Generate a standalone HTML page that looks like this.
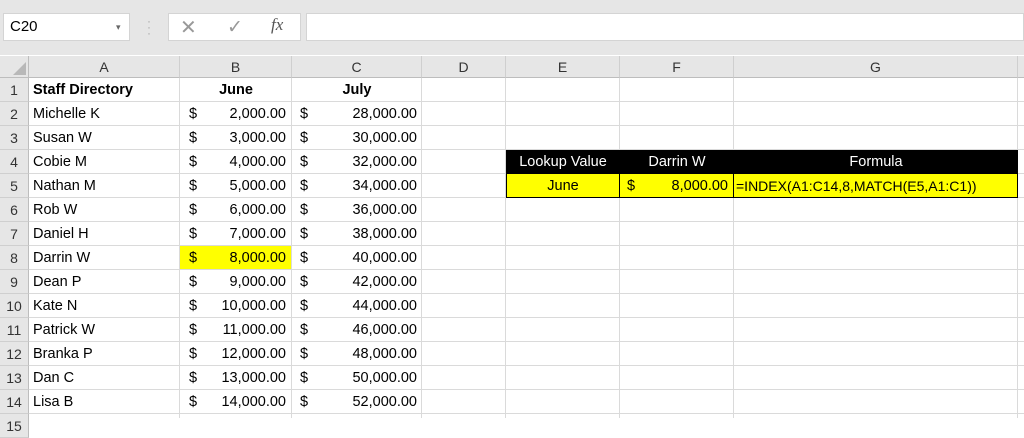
<!DOCTYPE html>
<html><head><style>
*{margin:0;padding:0;box-sizing:border-box}
body{width:1024px;height:418px;overflow:hidden;background:#fff;font-family:"Liberation Sans",Arial,sans-serif;font-size:14.5px;color:#000;position:relative}
.a{position:absolute}
.tb{left:0;top:0;width:1024px;height:55px;background:#e6e6e6}
.box{background:#fff;border:1px solid #d4d4d4}
.ch{top:56px;height:22px;background:#e6e6e6;border-right:1px solid #cfcfcf;border-bottom:1px solid #bdbdbd;text-align:center;line-height:22px;color:#333;font-size:14px}
.rh{left:0;width:29px;height:24px;background:#e6e6e6;border-bottom:1px solid #cfcfcf;border-right:1px solid #bdbdbd;text-align:center;line-height:24px;color:#333;font-size:14px}
.hl{height:1px;background:#dadada;left:29px;width:995px}
.vl{width:1px;background:#dadada;top:78px;height:340px}
.c{height:24px;line-height:24px;white-space:nowrap}
</style></head><body>
<div class="a tb"></div>
<div class="a box" style="left:3px;top:13px;width:127px;height:28px;line-height:26px;padding-left:6px;font-size:15px">C20<span class="a" style="left:112px;top:0;font-size:9px;color:#666">▾</span></div>
<div class="a" style="left:147px;top:18px;color:#aaa;font-size:12px;line-height:6px">·<br>·<br>·</div>
<div class="a box" style="left:168px;top:13px;width:133px;height:28px"></div>
<div class="a" style="left:180px;top:15px;color:#999;font-size:20px">✕</div>
<div class="a" style="left:227px;top:16px;color:#999;font-size:19px">✓</div>
<div class="a" style="left:271px;top:15px;color:#555;font-size:17px;font-family:'Liberation Serif',serif;font-style:italic">fx</div>
<div class="a box" style="left:306px;top:13px;width:718px;height:28px"></div>
<div class="a" style="left:0;top:56px;width:29px;height:22px;background:#e6e6e6;border-right:1px solid #bdbdbd;border-bottom:1px solid #bdbdbd"></div>
<div class="a" style="left:13px;top:62px;width:0;height:0;border-left:13px solid transparent;border-bottom:13px solid #b8b8b8"></div>
<div class="a ch" style="left:29px;width:151px">A</div>
<div class="a ch" style="left:180px;width:112px">B</div>
<div class="a ch" style="left:292px;width:130px">C</div>
<div class="a ch" style="left:422px;width:84px">D</div>
<div class="a ch" style="left:506px;width:114px">E</div>
<div class="a ch" style="left:620px;width:114px">F</div>
<div class="a ch" style="left:734px;width:284px">G</div>
<div class="a ch" style="left:1018px;width:10px"></div>
<div class="a vl" style="left:179px"></div><div class="a vl" style="left:291px"></div><div class="a vl" style="left:421px"></div><div class="a vl" style="left:505px"></div><div class="a vl" style="left:619px"></div><div class="a vl" style="left:733px"></div><div class="a vl" style="left:1017px"></div>
<div id="rows"></div>
<script></script>
<!-- rows -->
<div class="a rh" style="top:78px">1</div><div class="a hl" style="top:101px"></div>
<div class="a rh" style="top:102px">2</div><div class="a hl" style="top:125px"></div>
<div class="a rh" style="top:126px">3</div><div class="a hl" style="top:149px"></div>
<div class="a rh" style="top:150px">4</div><div class="a hl" style="top:173px"></div>
<div class="a rh" style="top:174px">5</div><div class="a hl" style="top:197px"></div>
<div class="a rh" style="top:198px">6</div><div class="a hl" style="top:221px"></div>
<div class="a rh" style="top:222px">7</div><div class="a hl" style="top:245px"></div>
<div class="a rh" style="top:246px">8</div><div class="a hl" style="top:269px"></div>
<div class="a rh" style="top:270px">9</div><div class="a hl" style="top:293px"></div>
<div class="a rh" style="top:294px">10</div><div class="a hl" style="top:317px"></div>
<div class="a rh" style="top:318px">11</div><div class="a hl" style="top:341px"></div>
<div class="a rh" style="top:342px">12</div><div class="a hl" style="top:365px"></div>
<div class="a rh" style="top:366px">13</div><div class="a hl" style="top:389px"></div>
<div class="a rh" style="top:390px">14</div><div class="a hl" style="top:413px"></div>
<div class="a rh" style="top:414px">15</div>
<!-- highlight B8 -->
<div class="a" style="left:180px;top:246px;width:111px;height:23px;background:#ffff00"></div>
<!-- E4:G5 table -->
<div class="a" style="left:506px;top:150px;width:512px;height:24px;background:#000"></div>
<div class="a" style="left:506px;top:174px;width:512px;height:24px;background:#ffff00;border:1px solid #000;border-top:none"></div>
<div class="a" style="left:619px;top:174px;width:1px;height:24px;background:#000"></div>
<div class="a" style="left:733px;top:174px;width:1px;height:24px;background:#000"></div>
<div class="a c" style="left:506px;top:150px;width:114px;text-align:center;color:#fff">Lookup Value</div>
<div class="a c" style="left:620px;top:150px;width:114px;text-align:center;color:#fff">Darrin W</div>
<div class="a c" style="left:734px;top:150px;width:284px;text-align:center;color:#fff">Formula</div>
<div class="a c" style="left:506px;top:174px;width:114px;text-align:center">June</div>
<div class="a c" style="left:627px;top:174px">$</div>
<div class="a c" style="left:620px;top:174px;width:108px;text-align:right">8,000.00</div>
<div class="a c" style="left:736px;top:174px;font-size:14px">=INDEX(A1:C14,8,MATCH(E5,A1:C1))</div>
<!-- data -->
<div class="a c" style="left:33px;top:78px;font-weight:bold">Staff Directory</div>
<div class="a c" style="left:180px;top:78px;width:112px;text-align:center;font-weight:bold">June</div>
<div class="a c" style="left:292px;top:78px;width:130px;text-align:center;font-weight:bold">July</div>
<div style="position:absolute;left:0;top:102px">
<div class="a c" style="left:33px;top:0">Michelle K</div><div class="a c" style="left:189px;top:0">$</div><div class="a c" style="left:180px;top:0;width:106px;text-align:right">2,000.00</div><div class="a c" style="left:300px;top:0">$</div><div class="a c" style="left:292px;top:0;width:125px;text-align:right">28,000.00</div>
<div class="a c" style="left:33px;top:24px">Susan W</div><div class="a c" style="left:189px;top:24px">$</div><div class="a c" style="left:180px;top:24px;width:106px;text-align:right">3,000.00</div><div class="a c" style="left:300px;top:24px">$</div><div class="a c" style="left:292px;top:24px;width:125px;text-align:right">30,000.00</div>
<div class="a c" style="left:33px;top:48px">Cobie M</div><div class="a c" style="left:189px;top:48px">$</div><div class="a c" style="left:180px;top:48px;width:106px;text-align:right">4,000.00</div><div class="a c" style="left:300px;top:48px">$</div><div class="a c" style="left:292px;top:48px;width:125px;text-align:right">32,000.00</div>
<div class="a c" style="left:33px;top:72px">Nathan M</div><div class="a c" style="left:189px;top:72px">$</div><div class="a c" style="left:180px;top:72px;width:106px;text-align:right">5,000.00</div><div class="a c" style="left:300px;top:72px">$</div><div class="a c" style="left:292px;top:72px;width:125px;text-align:right">34,000.00</div>
<div class="a c" style="left:33px;top:96px">Rob W</div><div class="a c" style="left:189px;top:96px">$</div><div class="a c" style="left:180px;top:96px;width:106px;text-align:right">6,000.00</div><div class="a c" style="left:300px;top:96px">$</div><div class="a c" style="left:292px;top:96px;width:125px;text-align:right">36,000.00</div>
<div class="a c" style="left:33px;top:120px">Daniel H</div><div class="a c" style="left:189px;top:120px">$</div><div class="a c" style="left:180px;top:120px;width:106px;text-align:right">7,000.00</div><div class="a c" style="left:300px;top:120px">$</div><div class="a c" style="left:292px;top:120px;width:125px;text-align:right">38,000.00</div>
<div class="a c" style="left:33px;top:144px">Darrin W</div><div class="a c" style="left:189px;top:144px">$</div><div class="a c" style="left:180px;top:144px;width:106px;text-align:right">8,000.00</div><div class="a c" style="left:300px;top:144px">$</div><div class="a c" style="left:292px;top:144px;width:125px;text-align:right">40,000.00</div>
<div class="a c" style="left:33px;top:168px">Dean P</div><div class="a c" style="left:189px;top:168px">$</div><div class="a c" style="left:180px;top:168px;width:106px;text-align:right">9,000.00</div><div class="a c" style="left:300px;top:168px">$</div><div class="a c" style="left:292px;top:168px;width:125px;text-align:right">42,000.00</div>
<div class="a c" style="left:33px;top:192px">Kate N</div><div class="a c" style="left:189px;top:192px">$</div><div class="a c" style="left:180px;top:192px;width:106px;text-align:right">10,000.00</div><div class="a c" style="left:300px;top:192px">$</div><div class="a c" style="left:292px;top:192px;width:125px;text-align:right">44,000.00</div>
<div class="a c" style="left:33px;top:216px">Patrick W</div><div class="a c" style="left:189px;top:216px">$</div><div class="a c" style="left:180px;top:216px;width:106px;text-align:right">11,000.00</div><div class="a c" style="left:300px;top:216px">$</div><div class="a c" style="left:292px;top:216px;width:125px;text-align:right">46,000.00</div>
<div class="a c" style="left:33px;top:240px">Branka P</div><div class="a c" style="left:189px;top:240px">$</div><div class="a c" style="left:180px;top:240px;width:106px;text-align:right">12,000.00</div><div class="a c" style="left:300px;top:240px">$</div><div class="a c" style="left:292px;top:240px;width:125px;text-align:right">48,000.00</div>
<div class="a c" style="left:33px;top:264px">Dan C</div><div class="a c" style="left:189px;top:264px">$</div><div class="a c" style="left:180px;top:264px;width:106px;text-align:right">13,000.00</div><div class="a c" style="left:300px;top:264px">$</div><div class="a c" style="left:292px;top:264px;width:125px;text-align:right">50,000.00</div>
<div class="a c" style="left:33px;top:288px">Lisa B</div><div class="a c" style="left:189px;top:288px">$</div><div class="a c" style="left:180px;top:288px;width:106px;text-align:right">14,000.00</div><div class="a c" style="left:300px;top:288px">$</div><div class="a c" style="left:292px;top:288px;width:125px;text-align:right">52,000.00</div>
</div>
</body></html>
